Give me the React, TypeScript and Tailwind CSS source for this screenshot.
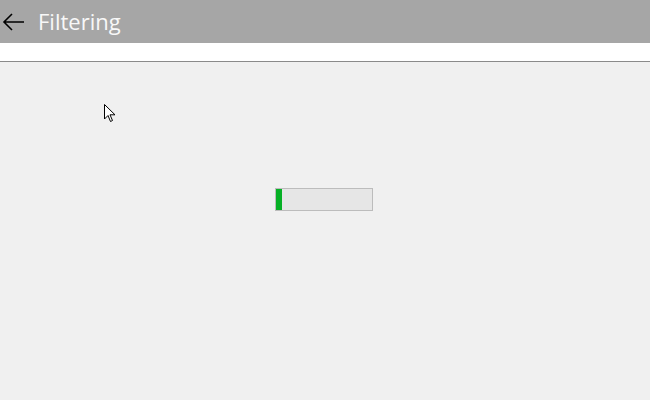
import React from "react";

export default function App() {
  return (
    <div className="relative w-[650px] h-[400px] overflow-hidden bg-[#f0f0f0]" style={{ fontFamily: '"Open Sans", "Noto Sans", sans-serif' }}>
      <div className="h-[43px] bg-[#a6a6a6] flex items-center">
        <svg width="24" height="20" viewBox="0 0 24 20" className="ml-[2px]">
          <path d="M2 10 H22 M10 2 L2 10 L10 18" fill="none" stroke="#000" strokeWidth="1.6" />
        </svg>
        <span className="ml-[12px] text-[22px] leading-none text-[#f8f8f8] mb-[2px]">Filtering</span>
      </div>
      <div className="h-[19px] bg-white border-b border-[#8a8a8a]" />
      <div className="flex justify-center pt-[126px] pr-[2px]">
        <div className="w-[98px] h-[23px] border border-[#bcbcbc] bg-[#e6e6e6] flex">
          <div className="w-[6px] h-full bg-[#06b025]" />
        </div>
      </div>
      <svg className="absolute left-[104px] top-[104px]" width="14" height="20" viewBox="0 0 14 20">
        <path d="M0.5 0.5 L0.5 15 L4 11.5 L6.5 17.5 L8.5 16.5 L6 10.8 L11 10.8 Z" fill="#fff" stroke="#000" strokeWidth="1" />
      </svg>
    </div>
  );
}
